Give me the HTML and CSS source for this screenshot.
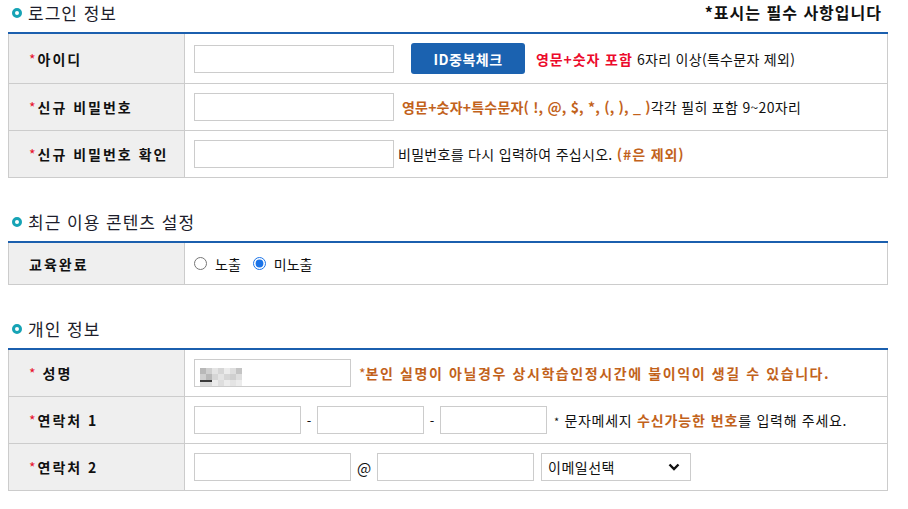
FILE: index.html
```html
<!DOCTYPE html>
<html lang="ko">
<head>
<meta charset="utf-8">
<title>회원정보</title>
<link rel="stylesheet" href="styles.css">
</head>
<body>
<div class="page">
  <section class="block">
    <div class="sec-head">
      <h2 class="sec-title"><span class="dot"></span>로그인 정보</h2>
      <p class="req-note">*표시는 필수 사항입니다</p>
    </div>
    <table class="form-table">
      <tr>
        <th><span class="star">*</span>아이디</th>
        <td>
          <div class="field">
            <input class="inp w200" type="text">
            <button class="btn-check" type="button">ID중복체크</button>
            <span class="txt"><b class="red">영문+숫자 포함</b> 6자리 이상(특수문자 제외)</span>
          </div>
        </td>
      </tr>
      <tr>
        <th><span class="star">*</span>신규 비밀번호</th>
        <td>
          <div class="field">
            <input class="inp w200" type="password">
            <span class="txt gap8"><b class="orange tight">영문+숫자+특수문자( !, @, $, *, (, ), _ )</b>각각 필히 포함 9~20자리</span>
          </div>
        </td>
      </tr>
      <tr>
        <th><span class="star">*</span>신규 비밀번호 확인</th>
        <td>
          <div class="field">
            <input class="inp w200" type="password">
            <span class="txt gap4">비밀번호를 다시 입력하여 주십시오. <b class="orange">(#은 제외)</b></span>
          </div>
        </td>
      </tr>
    </table>
  </section>

  <section class="block">
    <div class="sec-head">
      <h2 class="sec-title"><span class="dot"></span>최근 이용 콘텐츠 설정</h2>
    </div>
    <table class="form-table">
      <tr class="short">
        <th>교육완료</th>
        <td>
          <div class="field radios">
            <label class="radio"><input type="radio" name="edu">노출</label>
            <label class="radio"><input type="radio" name="edu" checked>미노출</label>
          </div>
        </td>
      </tr>
    </table>
  </section>

  <section class="block">
    <div class="sec-head">
      <h2 class="sec-title"><span class="dot"></span>개인 정보</h2>
    </div>
    <table class="form-table">
      <tr>
        <th><span class="star">*</span><span class="sp"></span>성명</th>
        <td>
          <div class="field">
            <span class="name-wrap">
              <input class="inp w157" type="text">
              <span class="mosaic">
                <i class="m1"></i><i class="m2"></i><i class="m3"></i><i class="m4"></i><i class="m5"></i><i class="m6"></i><i class="m7"></i>
                <i class="m2"></i><i class="m1"></i><i class="m4"></i><i class="m3"></i><i class="m4"></i><i class="m2"></i><i class="m6"></i>
                <i class="m8"></i><i class="m8"></i><i class="m5"></i><i class="m6"></i><i class="m5"></i><i class="m3"></i><i class="m5"></i>
              </span>
            </span>
            <b class="txt orange wide gap8"><span class="small-star">*</span>본인 실명이 아닐경우 상시학습인정시간에 불이익이 생길 수 있습니다.</b>
          </div>
        </td>
      </tr>
      <tr>
        <th><span class="star">*</span>연락처 1</th>
        <td>
          <div class="field">
            <input class="inp w107" type="text">
            <span class="sep">-</span>
            <input class="inp w107" type="text">
            <span class="sep">-</span>
            <input class="inp w107" type="text">
            <span class="txt loose gap7"><span class="tiny-star">*</span> 문자메세지 <b class="orange">수신가능한 번호</b>를 입력해 주세요.</span>
          </div>
        </td>
      </tr>
      <tr>
        <th><span class="star">*</span>연락처 2</th>
        <td>
          <div class="field">
            <input class="inp w157" type="text">
            <span class="at">@</span>
            <input class="inp w157" type="text">
            <span class="sel-wrap">
              <select class="sel">
                <option>이메일선택</option>
              </select>
              <svg class="chev" width="12" height="8" viewBox="0 0 12 8"><path d="M1.5 1.5 L6 6 L10.5 1.5" fill="none" stroke="#111" stroke-width="2.4"/></svg>
            </span>
          </div>
        </td>
      </tr>
    </table>
  </section>
</div>
</body>
</html>
```

FILE: styles.css
```css
* { box-sizing: border-box; }
html, body { margin: 0; padding: 0; background: #fff; }
body {
  font-family: "Noto Sans CJK KR", "Noto Sans", "Liberation Sans", sans-serif;
  color: #111;
  font-size: 14px;
}
.page { padding: 0 8px; width: 896px; }
.block + .block { margin-top: 31px; }

.sec-head {
  height: 32px;
  display: flex;
  justify-content: space-between;
  align-items: flex-start;
}
.sec-title {
  margin: 0;
  display: flex;
  align-items: center;
  height: 24px;
  font-size: 17px;
  font-weight: 400;
  letter-spacing: 1px;
  color: #1d1d2b;
}
.dot {
  width: 10px;
  height: 10px;
  border: 3px solid #16a3b5;
  border-radius: 50%;
  margin: 2px 6px 0 4px;
  flex: none;
}
.req-note {
  margin: 0;
  height: 24px;
  line-height: 24px;
  font-size: 16px;
  font-weight: 700;
  letter-spacing: 1px;
  padding-right: 6px;
  color: #111;
}

.form-table {
  width: 880px;
  border-collapse: collapse;
  border-top: 2px solid #1b5fae;
}
.form-table th,
.form-table td {
  border: 1px solid #cccccc;
  padding: 9px 9px;
  text-align: left;
  vertical-align: middle;
}
.form-table tr:first-child th,
.form-table tr:first-child td { border-top: 0; }
.form-table th {
  width: 176px;
  background: #efefef;
  padding-left: 20px;
  font-size: 14px;
  font-weight: 700;
  letter-spacing: 2px;
  color: #111;
  white-space: nowrap;
}
.star { color: #e8112d; font-weight: 400; }
.sp { display: inline-block; width: 5px; }

.field {
  display: flex;
  align-items: center;
  min-height: 28px;
  white-space: nowrap;
}
.inp {
  height: 28px;
  border: 1px solid #cccccc;
  padding: 0 6px;
  font: inherit;
  margin: 0;
  background: #fff;
}
.w200 { width: 200px; }
.w157 { width: 157px; }
.w107 { width: 107px; }

.btn-check {
  height: 31px;
  width: 114px;
  margin-left: 17px;
  border: 0;
  border-radius: 3px;
  background: #1b62b0;
  color: #fff;
  font: inherit;
  font-size: 14px;
  font-weight: 700;
  letter-spacing: 0.5px;
  margin-right: 11px;
}
.txt { font-size: 14px; letter-spacing: 0.3px; color: #111; }
.txt.loose { letter-spacing: 0.7px; }
.gap8 { margin-left: 8px; }
.gap7 { margin-left: 7px; }
.gap4 { margin-left: 4px; }
b { font-weight: 700; letter-spacing: 0.9px; }
b.tight { letter-spacing: 0.2px; }
b.wide { letter-spacing: 1.6px; }
.small-star { font-weight: 400; letter-spacing: 0; }
.red { color: #ec0a2b; }
.orange { color: #c2621b; }

.short th, .short td { padding-top: 9px; padding-bottom: 9px; }
.radios { min-height: 23px; }
.radio {
  display: inline-flex;
  align-items: center;
  font-size: 14px;
  margin-right: 12px;
}
.radio input {
  margin: 0 8px 0 0;
  width: 13px;
  height: 13px;
  accent-color: #1a73e8;
}

.name-wrap { position: relative; display: inline-block; line-height: 0; }
.mosaic {
  position: absolute;
  left: 6px;
  top: 9px;
  width: 42px;
  height: 18px;
  display: grid;
  grid-template-columns: repeat(7, 6px);
  grid-template-rows: repeat(3, 6px);
}
.mosaic i { display: block; }
.m1 { background: #b8b8b8; }
.m2 { background: #cfcfcf; }
.m3 { background: #e4e4e4; }
.m4 { background: #d6d6d6; }
.m5 { background: #ececec; }
.m6 { background: #dedede; }
.m7 { background: #c4c4c4; }
.m8 { background: #dadada; border-top: 2px solid #3a3a3a; }

.sep { width: 16px; text-align: center; font-size: 13px; }
.tiny-star { font-size: 11px; }
.at { width: 26px; text-align: center; font-size: 15px; }
.sel-wrap { position: relative; display: inline-block; margin-left: 7px; line-height: 0; }
.sel {
  -webkit-appearance: none;
  appearance: none;
  width: 150px;
  height: 28px;
  border: 1px solid #cccccc;
  background: #fff;
  padding: 0 6px;
  font-family: inherit;
  font-size: 14px;
  line-height: normal;
  letter-spacing: 0.5px;
  color: #111;
}
.chev { position: absolute; right: 11px; top: 10px; }
```
